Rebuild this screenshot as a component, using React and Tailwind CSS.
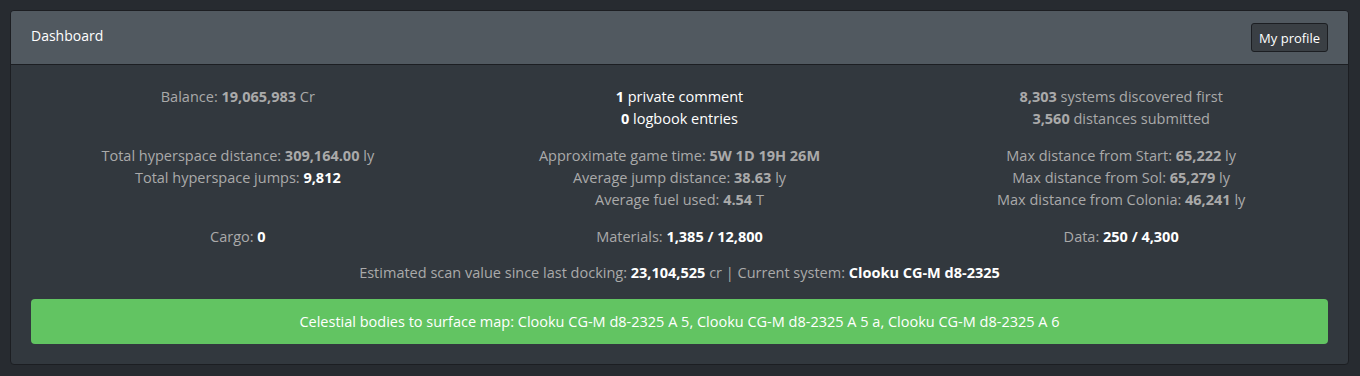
import React from 'react'

const font = { fontFamily: '"Open Sans", "Noto Sans", sans-serif' }

function Stat({ label, value, unit, white }) {
  return (
    <div>
      {label}: <b className={white ? 'font-bold text-white' : 'font-bold text-[#aaaaaa]'}>{value}</b>
      {unit ? ` ${unit}` : ''}
    </div>
  )
}

export default function App() {
  return (
    <div className="min-h-[376px] bg-[#272b30] p-[10px] text-[14.5px] leading-[22px] text-[#aaaaaa]" style={font}>
      <div className="w-[1339px] overflow-hidden rounded-[4px] border border-[#1c1e22] bg-[#32383e]">
        <div className="flex h-[54px] items-center justify-between border-b border-[#1c1e22] bg-[#515960] pl-[20px] pr-[20px]">
          <span className="mb-[4px] text-[14px] text-white">Dashboard</span>
          <button className="h-[29px] rounded-[3px] border border-[#1c1e22] bg-[#3a3f44] px-[7px] text-[13px] text-white">
            My profile
          </button>
        </div>
        <div className="px-[20px] pb-[20px] pt-[21px]">
          <div className="-mx-[14px] grid grid-cols-3 text-center">
            <div className="flex flex-col gap-[15px]">
              <div className="h-[44px]">
                <Stat label="Balance" value="19,065,983" unit="Cr" />
              </div>
              <div className="h-[66px]">
                <Stat label="Total hyperspace distance" value="309,164.00" unit="ly" />
                <Stat label="Total hyperspace jumps" value="9,812" white />
              </div>
              <Stat label="Cargo" value="0" white />
            </div>
            <div className="flex flex-col gap-[15px]">
              <div className="h-[44px] text-white">
                <div><b>1</b> private comment</div>
                <div><b>0</b> logbook entries</div>
              </div>
              <div className="h-[66px]">
                <Stat label="Approximate game time" value="5W 1D 19H 26M" />
                <Stat label="Average jump distance" value="38.63" unit="ly" />
                <Stat label="Average fuel used" value="4.54" unit="T" />
              </div>
              <Stat label="Materials" value="1,385 / 12,800" white />
            </div>
            <div className="flex flex-col gap-[15px]">
              <div className="h-[44px]">
                <div><b>8,303</b> systems discovered first</div>
                <div><b>3,560</b> distances submitted</div>
              </div>
              <div className="h-[66px]">
                <Stat label="Max distance from Start" value="65,222" unit="ly" />
                <Stat label="Max distance from Sol" value="65,279" unit="ly" />
                <Stat label="Max distance from Colonia" value="46,241" unit="ly" />
              </div>
              <Stat label="Data" value="250 / 4,300" white />
            </div>
          </div>
          <div className="mt-[14px] text-center">
            Estimated scan value since last docking: <b className="text-white">23,104,525</b> cr | Current system:{' '}
            <b className="text-white">Clooku CG-M d8-2325</b>
          </div>
          <div className="mt-[15px] flex h-[45px] items-center justify-center rounded-[4px] bg-[#62c462] text-white">
            Celestial bodies to surface map: Clooku CG-M d8-2325 A 5, Clooku CG-M d8-2325 A 5 a, Clooku CG-M d8-2325 A 6
          </div>
        </div>
      </div>
    </div>
  )
}
